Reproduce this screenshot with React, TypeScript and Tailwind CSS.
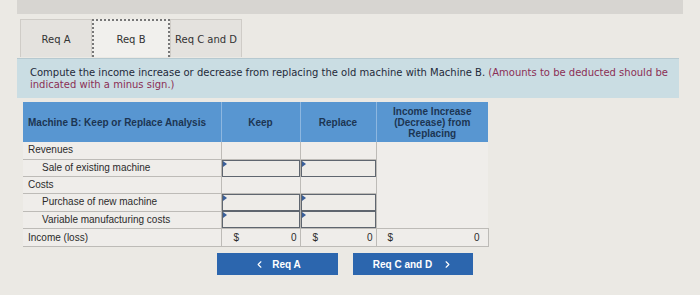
import { ChevronLeft, ChevronRight } from 'lucide-react';

interface RowProps {
  label: string;
  indent?: boolean;
  inputs?: boolean;
}

const ROWS: RowProps[] = [
  { label: 'Revenues' },
  { label: 'Sale of existing machine', indent: true, inputs: true },
  { label: 'Costs' },
  { label: 'Purchase of new machine', indent: true, inputs: true },
  { label: 'Variable manufacturing costs', indent: true, inputs: true },
];

function InputCell() {
  return (
    <td className="h-[17px] border-l border-[#b9b7b3] p-0">
      <div className="relative h-[17px] border-[1.5px] border-[#5f666f] bg-[#eeece8]">
        <span className="absolute left-0 top-0 h-0 w-0 border-y-[3px] border-l-[4px] border-y-transparent border-l-[#3a5f9a]" />
      </div>
    </td>
  );
}

function TableRow({ label, indent = false, inputs = false }: RowProps) {
  return (
    <tr className="h-[17px] text-[10px] text-[#2b2b2b]">
      <td className={`border-b border-[#bdbbb7] p-0 leading-[16px] ${indent ? 'pl-[19px]' : 'pl-[5px]'}`}>{label}</td>
      {inputs ? (
        <>
          <InputCell />
          <InputCell />
        </>
      ) : (
        <>
          <td className="border-b border-l border-[#bdbbb7] p-0" />
          <td className="border-b border-l border-[#bdbbb7] p-0" />
        </>
      )}
      <td className="border-l border-[#bdbbb7] p-0" />
    </tr>
  );
}

function Tab({ label, active = false }: { label: string; active?: boolean }) {
  return (
    <div
      className={`flex h-[38px] items-center justify-center pt-[1px] text-[10px] text-[#333] ${
        active
          ? 'w-[78px] border-2 border-dotted border-[#777] border-b-0 bg-[#f1f0ed]'
          : 'w-[72px] border border-b-0 border-[#cfccc7] bg-[#e4e2de]'
      }`}
    >
      {label}
    </div>
  );
}

export default function App() {
  return (
    <div className="h-[295px] w-[700px] overflow-hidden bg-[#ebe9e4] font-['DejaVu_Sans',sans-serif]">
      <div className="ml-[17px] h-[14px] w-[666px] bg-[#d7d5d1]" />

      <div className="ml-[20px] mt-[5px] flex">
        <Tab label="Req A" />
        <Tab label="Req B" active />
        <Tab label="Req C and D" />
      </div>

      <div className="ml-[17px] mt-[1px] h-[40px] w-[662px] border-t border-[#b6c9d0] bg-[#cadde3] pl-[13px] pr-[6px] pt-[8px] text-[10px] leading-[12px] text-[#1f2a3a]">
        <p className="whitespace-nowrap">
          Compute the income increase or decrease from replacing the old machine with Machine B.{' '}
          <span className="text-[#8a2f55]">(Amounts to be deducted should be</span>
        </p>
        <p className="text-[#8a2f55]">indicated with a minus sign.)</p>
      </div>

      <table className="ml-[23px] mt-[4px] w-[465px] table-fixed border-collapse font-['Liberation_Sans',sans-serif]">
        <colgroup>
          <col className="w-[198px]" />
          <col className="w-[79px]" />
          <col className="w-[76px]" />
          <col className="w-[112px]" />
        </colgroup>
        <thead>
          <tr className="h-[40px] bg-[#5896d1] text-[10px] font-bold text-[#1c3553]">
            <th className="p-0 pl-[5px] text-left">Machine B: Keep or Replace Analysis</th>
            <th className="border-l border-[#8db7e0] p-0 text-center">Keep</th>
            <th className="border-l border-[#8db7e0] p-0 text-center">Replace</th>
            <th className="border-l border-[#8db7e0] p-0 text-center leading-[11px]">
              Income Increase
              <br />
              (Decrease) from
              <br />
              Replacing
            </th>
          </tr>
        </thead>
        <tbody className="bg-[#efedea]">
          {ROWS.map((row) => (
            <TableRow key={row.label} {...row} />
          ))}
          <tr className="h-[18px] text-[10px] text-[#2b2b2b]">
            <td className="border-b border-[#bdbbb7] p-0 pl-[5px]">Income (loss)</td>
            <td className="border border-[#bdbbb7] p-0">
              <div className="flex justify-between pl-[12px] pr-[3px]">
                <span>$</span>
                <span>0</span>
              </div>
            </td>
            <td className="border border-[#bdbbb7] p-0">
              <div className="flex justify-between pl-[12px] pr-[3px]">
                <span>$</span>
                <span>0</span>
              </div>
            </td>
            <td className="border border-[#bdbbb7] p-0">
              <div className="flex justify-between pl-[11px] pr-[8px]">
                <span>$</span>
                <span>0</span>
              </div>
            </td>
          </tr>
        </tbody>
      </table>

      <div className="ml-[217px] mt-[6px] flex gap-[15px] font-['Liberation_Sans',sans-serif] text-[10px] font-bold text-white">
        <button className="flex h-[22px] w-[121px] items-center justify-center gap-[7px] bg-[#2c66ae]">
          <ChevronLeft size={11} strokeWidth={2.5} />
          Req A
        </button>
        <button className="flex h-[22px] w-[120px] items-center justify-center gap-[10px] bg-[#2c66ae]">
          Req C and D
          <ChevronRight size={11} strokeWidth={2.5} />
        </button>
      </div>
    </div>
  );
}
